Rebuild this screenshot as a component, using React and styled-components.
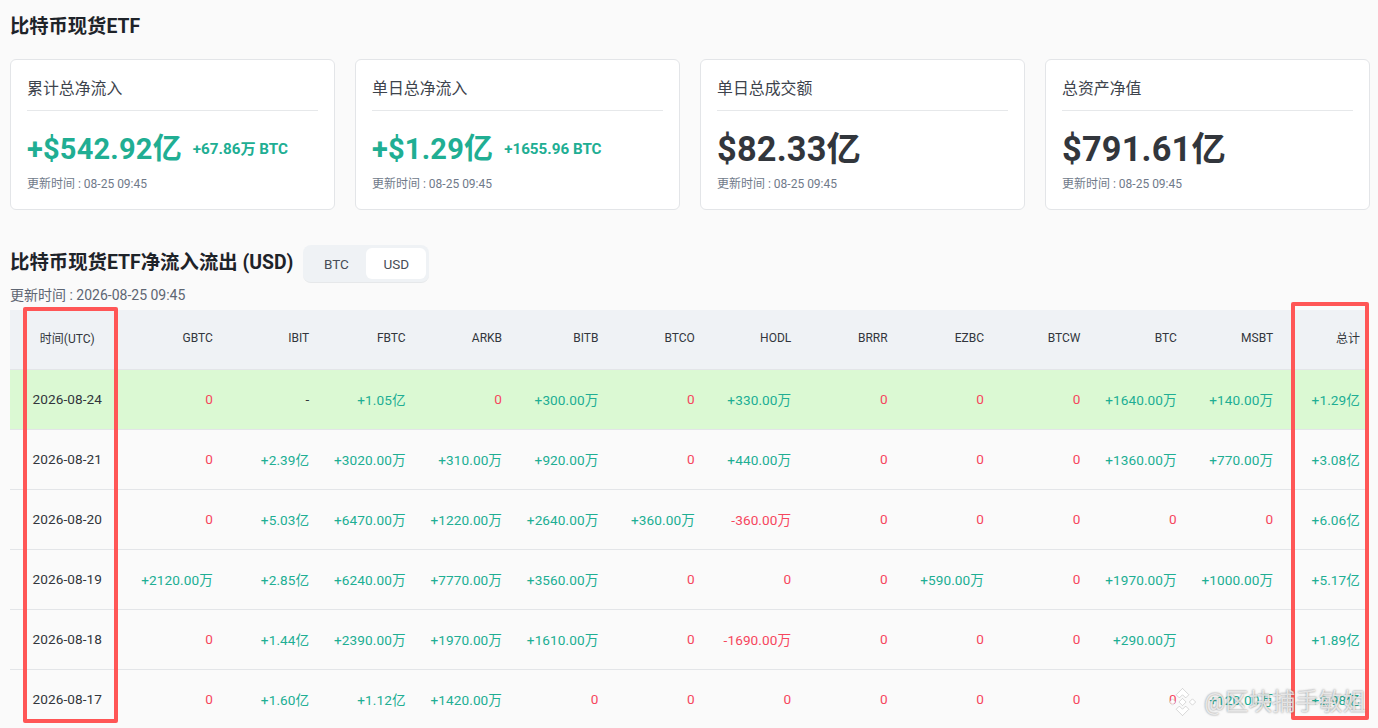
import React from "react";
import styled, { createGlobalStyle } from "styled-components";

const FONT = `"Roboto", "Noto Sans CJK SC", sans-serif`;

const Global = createGlobalStyle`
  html, body { margin: 0; padding: 0; background: #fafafa; overflow: hidden; }
  body { font-family: ${FONT}; color: #1e2329; }
  #root { width: 1378px; height: 728px; overflow: hidden; position: relative; }
`;

const Page = styled.div`
  padding: 15px 10px 0;
  box-sizing: border-box;
`;
const PageTitle = styled.h1`
  margin: 0;
  font-size: 19.3px;
  line-height: 24px;
  font-weight: 700;
  color: #1e2329;
`;
const Cards = styled.div`
  display: grid;
  grid-template-columns: repeat(4, 325px);
  column-gap: 20px;
  margin-top: 20px;
`;
const Card = styled.div`
  height: 151px;
  box-sizing: border-box;
  background: #fff;
  border: 1px solid #e3e5e8;
  border-radius: 6px;
  padding: 17px 16px 0;
`;
const CardLabel = styled.div`
  font-size: 15.9px;
  line-height: 24px;
  color: #3d434c;
  padding-bottom: 9px;
  border-bottom: 1px solid #e6e8ea;
`;
const ValueRow = styled.div`
  display: flex;
  align-items: center;
  gap: 11px;
  margin-top: 19px;
  height: 38px;
`;
const BigValue = styled.div`
  font-size: ${p => (p.$up ? "29px" : "34.3px")};
  line-height: 38px;
  font-weight: 700;
  letter-spacing: 0.2px;
  color: ${p => (p.$up ? "#20ae93" : "#32363c")};
`;
const SubValue = styled.div`
  font-size: 15.2px;
  line-height: 20px;
  margin-bottom: 1px;
  font-weight: 700;
  color: #20ae93;
`;
const Updated = styled.div`
  margin-top: 8px;
  font-size: 12px;
  line-height: 16px;
  color: #707a8a;
`;
const SectionHead = styled.div`
  display: flex;
  align-items: center;
  gap: 10px;
  margin-top: 35px;
  height: 38px;
`;
const SectionTitle = styled.h2`
  margin: 0 0 2px;
  font-size: 19.4px;
  line-height: 24px;
  font-weight: 700;
  color: #1e2329;
`;
const Toggle = styled.div`
  display: flex;
  height: 38px;
  box-sizing: border-box;
  padding: 3px;
  background: #eff2f5;
  border-radius: 8px;
  border-bottom: 1px solid #e6e8ea;
`;
const ToggleItem = styled.div`
  width: 60px;
  display: flex;
  align-items: center;
  justify-content: center;
  font-size: 13.5px;
  color: #474d57;
  border-radius: 6px;
  background: ${p => (p.$active ? "#fff" : "transparent")};
`;
const TableUpdated = styled.div`
  margin-top: 2px;
  font-size: 14px;
  line-height: 20px;
  color: #5e6673;
`;
const Table = styled.table`
  width: 1358px;
  table-layout: fixed;
  border-collapse: collapse;
  margin-top: 5px;
`;
const HeadCell = styled.th`
  height: 59px;
  padding: 0 8px 3px;
  box-sizing: border-box;
  background: #eff2f5;
  border-bottom: 1px solid #e3e5e8;
  font-size: 12px;
  font-weight: 400;
  color: #32363c;
  text-align: ${p => (p.$center ? "center" : "right")};
`;
const Row = styled.tr`
  background: ${p => (p.$hl ? "#dbf9d3" : "transparent")};
`;
const Cell = styled.td`
  height: 60px;
  padding: 0 8px;
  box-sizing: border-box;
  border-bottom: 1px solid #e3e5e8;
  font-size: 13.6px;
  letter-spacing: 0.1px;
  white-space: nowrap;
  color: ${p => (p.$t === "up" ? "#20ae93" : p.$t === "down" ? "#f6465d" : "#32363c")};
  text-align: ${p => (p.$center ? "center" : "right")};
`;
const Mark = styled.div`
  position: absolute;
  box-sizing: border-box;
  border: 4px solid #ff5656;
  border-radius: 2px;
  pointer-events: none;
`;
const LeftMark = styled(Mark)`
  left: 23px; top: 307px; width: 95px; height: 416px;
`;
const RightMark = styled(Mark)`
  left: 1291px; top: 302px; width: 78px; height: 418px;
`;
const Watermark = styled.div`
  position: absolute;
  left: 1168px;
  top: 686px;
  display: flex;
  align-items: center;
  gap: 7px;
  font-size: 23.5px;
  line-height: 32px;
  white-space: nowrap;
  color: rgba(255, 255, 255, 0.72);
  text-shadow: 0 0 2px rgba(90, 90, 90, 0.8);
`;

const cols = ["GBTC","IBIT","FBTC","ARKB","BITB","BTCO","HODL","BRRR","EZBC","BTCW","BTC","MSBT","总计"];
const rows = [
  ["2026-08-24","0","-","+1.05亿","0","+300.00万","0","+330.00万","0","0","0","+1640.00万","+140.00万","+1.29亿"],
  ["2026-08-21","0","+2.39亿","+3020.00万","+310.00万","+920.00万","0","+440.00万","0","0","0","+1360.00万","+770.00万","+3.08亿"],
  ["2026-08-20","0","+5.03亿","+6470.00万","+1220.00万","+2640.00万","+360.00万","-360.00万","0","0","0","0","0","+6.06亿"],
  ["2026-08-19","+2120.00万","+2.85亿","+6240.00万","+7770.00万","+3560.00万","0","0","0","+590.00万","0","+1970.00万","+1000.00万","+5.17亿"],
  ["2026-08-18","0","+1.44亿","+2390.00万","+1970.00万","+1610.00万","0","-1690.00万","0","0","0","+290.00万","0","+1.89亿"],
  ["2026-08-17","0","+1.60亿","+1.12亿","+1420.00万","0","0","0","0","0","0","0","+120.00万","+2.98亿"],
];
const tone = v => v === "-" ? "flat" : v.startsWith("+") ? "up" : "down";

const cards = [
  { label: "累计总净流入", value: "+$542.92亿", sub: "+67.86万 BTC", up: true },
  { label: "单日总净流入", value: "+$1.29亿", sub: "+1655.96 BTC", up: true },
  { label: "单日总成交额", value: "$82.33亿" },
  { label: "总资产净值", value: "$791.61亿" },
];

const Logo = () => (
  <svg width="29" height="30" viewBox="0 0 32 32" fill="rgba(255,255,255,0.85)" stroke="rgba(120,120,120,0.5)" strokeWidth="0.6">
    <path d="M16 1 L23 8 L19.5 11.5 L16 8 L12.5 11.5 L9 8 Z" />
    <path d="M5 12.5 L8.5 16 L5 19.5 L1.5 16 Z" />
    <path d="M27 12.5 L30.5 16 L27 19.5 L23.5 16 Z" />
    <path d="M16 12 L20 16 L16 20 L12 16 Z" />
    <path d="M16 31 L9 24 L12.5 20.5 L16 24 L19.5 20.5 L23 24 Z" />
  </svg>
);

export default function App() {
  return (
    <>
      <Global />
      <Page>
        <PageTitle>比特币现货ETF</PageTitle>
        <Cards>
          {cards.map(c => (
            <Card key={c.label}>
              <CardLabel>{c.label}</CardLabel>
              <ValueRow>
                <BigValue $up={c.up}>{c.value}</BigValue>
                {c.sub && <SubValue>{c.sub}</SubValue>}
              </ValueRow>
              <Updated>更新时间 : 08-25 09:45</Updated>
            </Card>
          ))}
        </Cards>
        <SectionHead>
          <SectionTitle>比特币现货ETF净流入流出 (USD)</SectionTitle>
          <Toggle>
            <ToggleItem>BTC</ToggleItem>
            <ToggleItem $active>USD</ToggleItem>
          </Toggle>
        </SectionHead>
        <TableUpdated>更新时间 : 2026-08-25 09:45</TableUpdated>
        <Table>
          <colgroup>
            <col style={{ width: 114.5 }} />
            {cols.slice(0, 12).map(c => <col key={c} style={{ width: 96.4 }} />)}
            <col />
          </colgroup>
          <thead>
            <tr>
              <HeadCell $center>时间(UTC)</HeadCell>
              {cols.map(c => <HeadCell key={c}>{c}</HeadCell>)}
            </tr>
          </thead>
          <tbody>
            {rows.map((r, i) => (
              <Row key={r[0]} $hl={i === 0}>
                <Cell $center>{r[0]}</Cell>
                {r.slice(1).map((v, j) => <Cell key={j} $t={tone(v)}>{v}</Cell>)}
              </Row>
            ))}
          </tbody>
        </Table>
      </Page>
      <LeftMark />
      <RightMark />
      <Watermark><Logo />@区块捕手敏姐</Watermark>
    </>
  );
}
